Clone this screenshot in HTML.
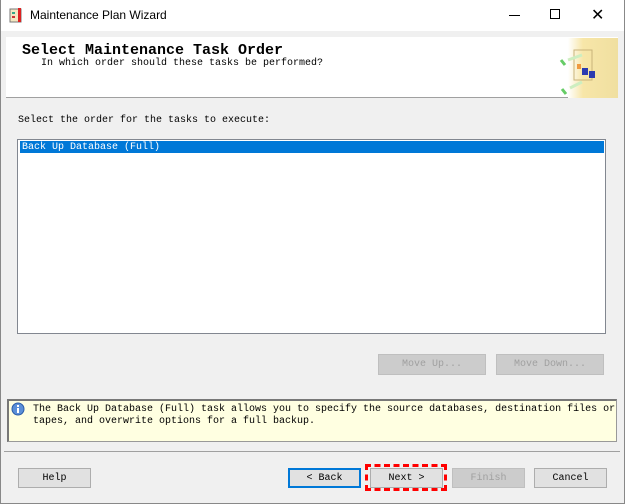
<!DOCTYPE html>
<html><head><style>
*{margin:0;padding:0;box-sizing:border-box}
body{width:625px;height:504px;background:#f0f0f0;position:relative;overflow:hidden;font-family:"Liberation Mono","Noto Sans CJK SC",monospace;font-size:10px;color:#000}
.a{position:absolute}
.btn{position:absolute;height:20px;background:#e1e1e1;border:1px solid #adadad;text-align:center;line-height:19px;font-size:10px}
.dis{color:#a0a0a0;background:#cccccc;border-color:#bfbfbf}
</style></head><body>
<div class="a" style="left:0;top:0;width:625px;height:31px;background:#fff;border-left:1px solid #888;border-right:1px solid #888"></div>
<svg class="a" style="left:8px;top:7px" width="16" height="16"><rect x="2" y="2" width="11" height="13" fill="#f4e7c0" stroke="#777"/><rect x="4" y="5" width="3" height="2" fill="#3a8"/><rect x="4" y="9" width="3" height="2" fill="#c33"/><rect x="10" y="1" width="3" height="14" fill="#d22"/></svg>
<div class="a" style="left:30px;top:8px;font-family:'Liberation Sans',sans-serif;font-size:12px">Maintenance Plan Wizard</div>
<div class="a" style="left:509px;top:15px;width:11px;height:1px;background:#000"></div>
<div class="a" style="left:550px;top:9px;width:10px;height:10px;border:1px solid #000"></div>
<div class="a" style="left:591px;top:5px;font-family:'Liberation Sans',sans-serif;font-size:16px;font-weight:300">✕</div>
<div class="a" style="left:0;top:31px;width:1px;height:473px;background:#888"></div>
<div class="a" style="left:624px;top:31px;width:1px;height:473px;background:#888"></div>
<div class="a" style="left:6px;top:37px;width:612px;height:61px;background:#fff;border-bottom:1px solid #a0a0a0"></div>
<div class="a" style="left:22px;top:42px;font-size:15px;font-weight:bold">Select Maintenance Task Order</div>
<div class="a" style="left:41px;top:58px">In which order should these tasks be performed?</div>
<svg class="a" style="left:556px;top:38px" width="62" height="60"><defs><linearGradient id="g" x1="0" x2="1"><stop offset="0" stop-color="#fff"/><stop offset="0.3" stop-color="#f7e6a8"/><stop offset="1" stop-color="#f0dfa0"/></linearGradient></defs><rect x="12" y="0" width="50" height="60" fill="url(#g)"/><rect x="18" y="12" width="18" height="30" fill="none" stroke="#c9b37a"/><rect x="26" y="30" width="6" height="7" fill="#2b3bb0"/><rect x="33" y="33" width="6" height="7" fill="#2b3bb0"/><rect x="21" y="26" width="4" height="5" fill="#f09a40"/><path d="M5 22 L9 27 M6 51 L10 56" stroke="#6c6" stroke-width="3"/><path d="M12 22 L26 17 M14 50 L26 44" stroke="#cdeec0" stroke-width="3"/></svg>
<div class="a" style="left:18px;top:115px">Select the order for the tasks to execute:</div>
<div class="a" style="left:17px;top:139px;width:589px;height:195px;background:#fff;border:1px solid #828790"></div>
<div class="a" style="left:20px;top:141px;width:584px;height:12px;background:#0078d7;color:#fff;line-height:13px;padding-left:2px">Back Up Database (Full)</div>
<div class="btn dis" style="left:378px;top:354px;width:108px;height:21px;line-height:20px">Move Up...</div>
<div class="btn dis" style="left:496px;top:354px;width:108px;height:21px;line-height:20px">Move Down...</div>
<div class="a" style="left:7px;top:399px;width:610px;height:43px;background:#ffffe1;border:1px solid #999;border-left:2px solid #777;border-top:2px solid #777"></div>
<svg class="a" style="left:11px;top:402px" width="14" height="14"><circle cx="7" cy="7" r="6" fill="#5b8fd8" stroke="#2a5ca8"/><rect x="6" y="6" width="2" height="5" fill="#fff"/><rect x="6" y="3" width="2" height="2" fill="#fff"/></svg>
<div class="a" style="left:33px;top:404px;line-height:12px">The Back Up Database (Full) task allows you to specify the source databases, destination files or<br>tapes, and overwrite options for a full backup.</div>
<div class="a" style="left:4px;top:451px;width:616px;height:1px;background:#a0a0a0"></div>
<div class="btn" style="left:18px;top:468px;width:73px">Help</div>
<div class="btn" style="left:288px;top:468px;width:73px;border:2px solid #0078d7;line-height:17px">&lt; Back</div>
<div class="btn" style="left:370px;top:468px;width:73px">Next &gt;</div>
<div class="a" style="left:365px;top:464px;width:82px;height:27px;border:3px dashed #f00"></div>
<div class="btn dis" style="left:452px;top:468px;width:73px">Finish</div>
<div class="btn" style="left:534px;top:468px;width:73px">Cancel</div>
<div class="a" style="left:0;top:503px;width:625px;height:1px;background:#888"></div>
</body></html>
